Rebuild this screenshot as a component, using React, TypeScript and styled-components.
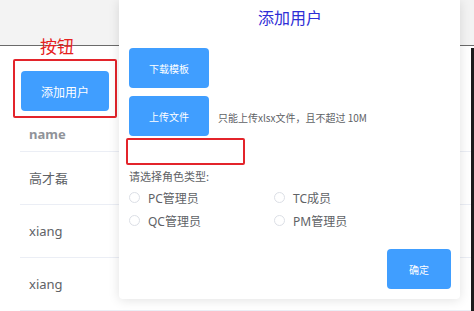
import { FC } from 'react';
import styled, { createGlobalStyle } from 'styled-components';

const GlobalStyle = createGlobalStyle`
  html, body {
    margin: 0;
    padding: 0;
    background: #ffffff;
  }
  body {
    font-family: "Noto Sans", "Noto Sans CJK SC", sans-serif;
  }
`;

const Page = styled.div`
  position: relative;
  width: 474px;
  height: 311px;
  overflow: hidden;
  background: #ffffff;
`;

const TopBar = styled.div`
  height: 45px;
  background: #f3f3f3;
  border-bottom: 1px solid #6a6a6a;
`;

const Body = styled.div`
  display: flex;
  height: 265px;
`;

const Main = styled.div`
  flex: 1;
  padding: 13px 0 0 13px;
`;

const ScrollEdge = styled.div`
  width: 3px;
  margin-top: 2px;
  background: #1c1c1c;
`;

const Annotation = styled.div`
  position: absolute;
  left: 40px;
  top: 35px;
  font-family: "Noto Sans CJK SC", sans-serif;
  font-size: 17px;
  line-height: 21px;
  color: #e5211d;
`;

const HighlightBox = styled.div<{ $width: number; $height: number }>`
  box-sizing: border-box;
  width: ${p => p.$width}px;
  height: ${p => p.$height}px;
  border: 2px solid #e3242b;
  border-radius: 2px;
`;

const OuterHighlight = styled(HighlightBox)`
  padding: 10px 6px 0 6px;
`;

const BlueButton = styled.button<{ $width: number; $size?: number }>`
  box-sizing: border-box;
  width: ${p => p.$width}px;
  height: 40px;
  border: none;
  border-radius: 4px;
  background: #409eff;
  color: #ffffff;
  font-family: "Noto Sans CJK SC", sans-serif;
  font-size: ${p => p.$size ?? 10}px;
  padding: 0;
  cursor: pointer;
`;

const Table = styled.div`
  margin-left: 7px;
`;

const HeaderCell = styled.div`
  height: 33px;
  line-height: 33px;
  padding-left: 9px;
  border-bottom: 1px solid #ebeef5;
  font-size: 13px;
  font-weight: 700;
  color: #909399;
`;

const Cell = styled.div`
  height: 52px;
  line-height: 52px;
  padding-left: 9px;
  border-bottom: 1px solid #ebeef5;
  font-family: "Noto Sans", "Noto Sans CJK SC", sans-serif;
  font-size: 13px;
  color: #606266;
`;

const Modal = styled.div`
  position: absolute;
  left: 119px;
  top: 0;
  width: 341px;
  height: 299px;
  box-sizing: border-box;
  padding: 0 9px 0 10px;
  background: #ffffff;
  border-radius: 0 0 4px 4px;
  box-shadow: 0 1px 12px rgba(0, 0, 0, 0.12);
  display: flex;
  flex-direction: column;
`;

const ModalTitle = styled.div`
  height: 34px;
  line-height: 34px;
  text-align: center;
  font-family: "Noto Sans CJK SC", sans-serif;
  font-size: 16px;
  color: #2e2ed6;
`;

const ButtonRow = styled.div<{ $top: number }>`
  display: flex;
  align-items: center;
  gap: 9px;
  margin-top: ${p => p.$top}px;
`;

const Hint = styled.span`
  font-family: "Noto Sans CJK SC", sans-serif;
  font-size: 10px;
  color: #606266;
  padding-top: 3px;
`;

const UploadBox = styled(HighlightBox)`
  margin: 2px 0 0 -3px;
`;

const RoleLabel = styled.div`
  margin-top: 4px;
  line-height: 14px;
  font-family: "Noto Sans CJK SC", sans-serif;
  font-size: 11px;
  color: #606266;
`;

const RadioGrid = styled.div`
  display: grid;
  grid-template-columns: 145px 145px;
  margin-top: 3px;
`;

const RadioItem = styled.label`
  display: flex;
  align-items: center;
  height: 23px;
  font-family: "Noto Sans", "Noto Sans CJK SC", sans-serif;
  font-size: 12px;
  color: #606266;
`;

const RadioCircle = styled.span`
  box-sizing: border-box;
  width: 11px;
  height: 11px;
  margin-right: 8px;
  border: 1px solid #dcdfe6;
  border-radius: 50%;
  background: #ffffff;
`;

const Footer = styled.div`
  display: flex;
  justify-content: flex-end;
  margin-top: 17px;
`;

const rows = ['高才磊', 'xiang', 'xiang'];
const roles = ['PC管理员', 'TC成员', 'QC管理员', 'PM管理员'];

const App: FC = () => {
  return (
    <Page>
      <GlobalStyle />
      <TopBar />
      <Body>
        <Main>
          <OuterHighlight $width={104} $height={59}>
            <BlueButton $width={88} $size={12}>添加用户</BlueButton>
          </OuterHighlight>
          <Table>
            <HeaderCell>name</HeaderCell>
            {rows.map((name, i) => (
              <Cell key={i}>{name}</Cell>
            ))}
          </Table>
        </Main>
        <ScrollEdge />
      </Body>
      <Annotation>按钮</Annotation>

      <Modal>
        <ModalTitle>添加用户</ModalTitle>
        <ButtonRow $top={14}>
          <BlueButton $width={80}>下载模板</BlueButton>
        </ButtonRow>
        <ButtonRow $top={8}>
          <BlueButton $width={80}>上传文件</BlueButton>
          <Hint>只能上传xlsx文件，且不超过 10M</Hint>
        </ButtonRow>
        <UploadBox $width={119} $height={27} />
        <RoleLabel>请选择角色类型:</RoleLabel>
        <RadioGrid>
          {roles.map(role => (
            <RadioItem key={role}>
              <RadioCircle />
              {role}
            </RadioItem>
          ))}
        </RadioGrid>
        <Footer>
          <BlueButton $width={64}>确定</BlueButton>
        </Footer>
      </Modal>
    </Page>
  );
};

export default App;
